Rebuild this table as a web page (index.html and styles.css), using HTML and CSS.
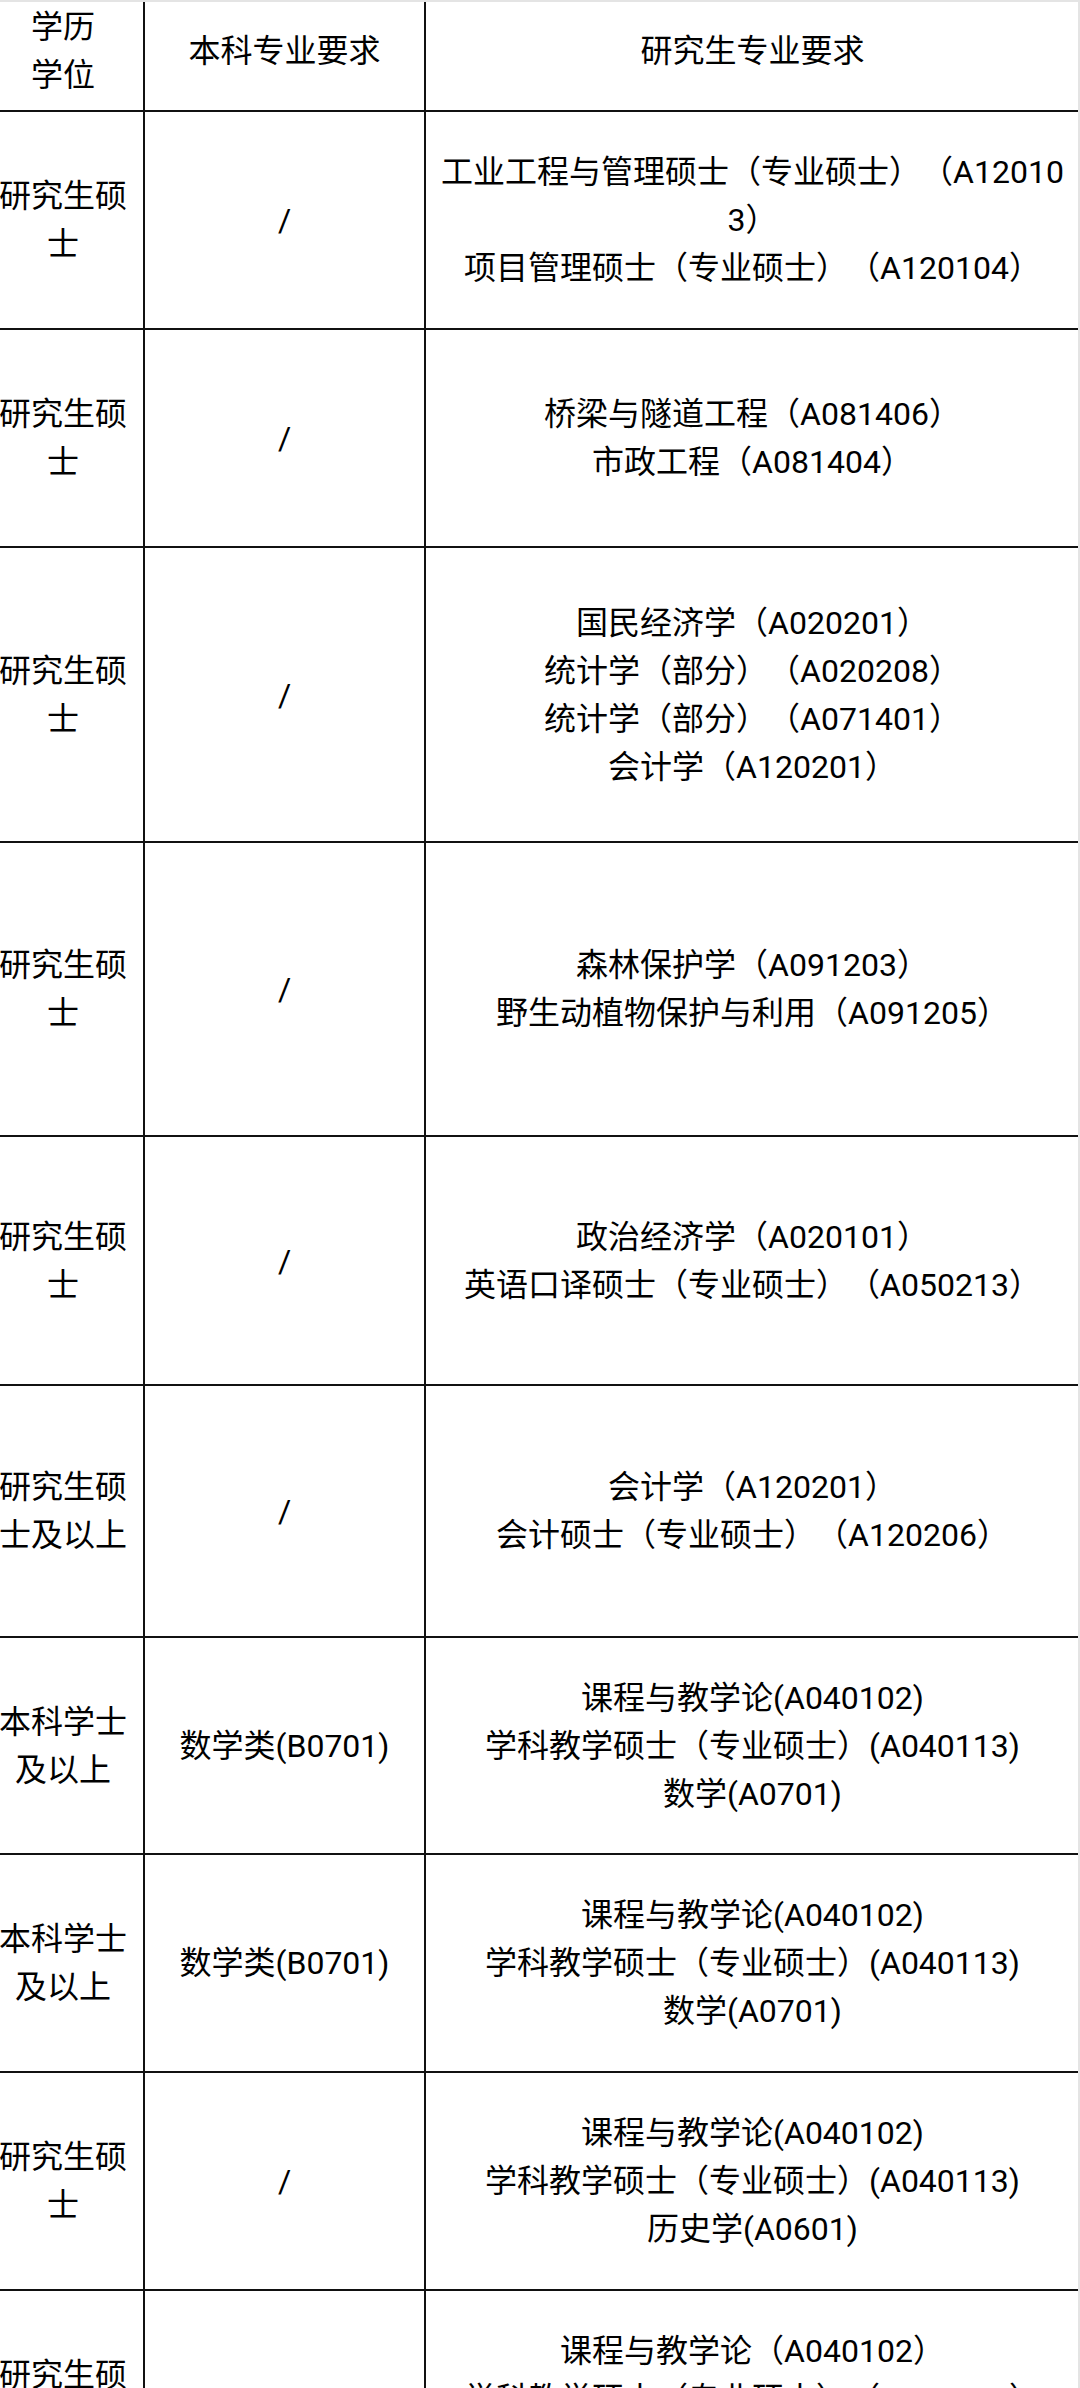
FILE: index.html
```html
<!DOCTYPE html>
<html lang="zh-CN">
<head>
<meta charset="utf-8">
<title>专业要求</title>
<link rel="stylesheet" href="styles.css">
</head>
<body>
<div class="frame">
<table class="req">
<colgroup><col class="c1"><col class="c2"><col class="c3"></colgroup>
<tr class="head"><td>学历<br>学位</td><td>本科专业要求</td><td>研究生专业要求</td></tr>
<tr class="h218"><td>研究生硕士</td><td>/</td><td>工业工程与管理硕士（专业硕士）（A120103）<br>项目管理硕士（专业硕士）（A120104）</td></tr>
<tr class="h218"><td>研究生硕士</td><td>/</td><td>桥梁与隧道工程（A081406）<br>市政工程（A081404）</td></tr>
<tr class="h295"><td>研究生硕士</td><td>/</td><td>国民经济学（A020201）<br>统计学（部分）（A020208）<br>统计学（部分）（A071401）<br>会计学（A120201）</td></tr>
<tr class="h294"><td>研究生硕士</td><td>/</td><td>森林保护学（A091203）<br>野生动植物保护与利用（A091205）</td></tr>
<tr class="h249"><td>研究生硕士</td><td>/</td><td>政治经济学（A020101）<br>英语口译硕士（专业硕士）（A050213）</td></tr>
<tr class="h252"><td>研究生硕士及以上</td><td>/</td><td>会计学（A120201）<br>会计硕士（专业硕士）（A120206）</td></tr>
<tr class="h217"><td>本科学士及以上</td><td>数学类(B0701)</td><td>课程与教学论(A040102)<br>学科教学硕士（专业硕士）(A040113)<br>数学(A0701)</td></tr>
<tr class="h218"><td>本科学士及以上</td><td>数学类(B0701)</td><td>课程与教学论(A040102)<br>学科教学硕士（专业硕士）(A040113)<br>数学(A0701)</td></tr>
<tr class="h218"><td>研究生硕士</td><td>/</td><td>课程与教学论(A040102)<br>学科教学硕士（专业硕士）(A040113)<br>历史学(A0601)</td></tr>
<tr class="h218"><td>研究生硕士</td><td>/</td><td>课程与教学论（A040102）<br>学科教学硕士（专业硕士）（A040113）<br>历史学（A0601）</td></tr>
</table>
</div>
</body>
</html>
```

FILE: styles.css
```css
html, body {
  margin: 0;
  padding: 0;
  background: #ffffff;
}

.frame {
  width: 1080px;
  height: 2388px;
  box-sizing: border-box;
  border-top: 2px solid #e4e4e4;
  border-right: 2px solid #e4e4e4;
  overflow: hidden;
  background: #ffffff;
}

.req {
  table-layout: fixed;
  border-collapse: collapse;
  width: 1098px;
  margin: -12px 0 0 -19px;
  font-family: Roboto, "Noto Sans CJK SC", "Noto Sans", sans-serif;
  font-size: 32px;
  line-height: 48px;
  color: #000000;
  text-spacing-trim: space-all;
}

.c1 { width: 162px; }
.c2 { width: 281px; }
.c3 { width: 655px; }

.req td {
  border: 2px solid #111111;
  padding: 0 10px;
  text-align: center;
  vertical-align: middle;
  word-break: break-all;
}

.head { height: 120px; }
.h217 { height: 217px; }
.h218 { height: 218px; }
.h249 { height: 249px; }
.h252 { height: 252px; }
.h294 { height: 294px; }
.h295 { height: 295px; }
```
